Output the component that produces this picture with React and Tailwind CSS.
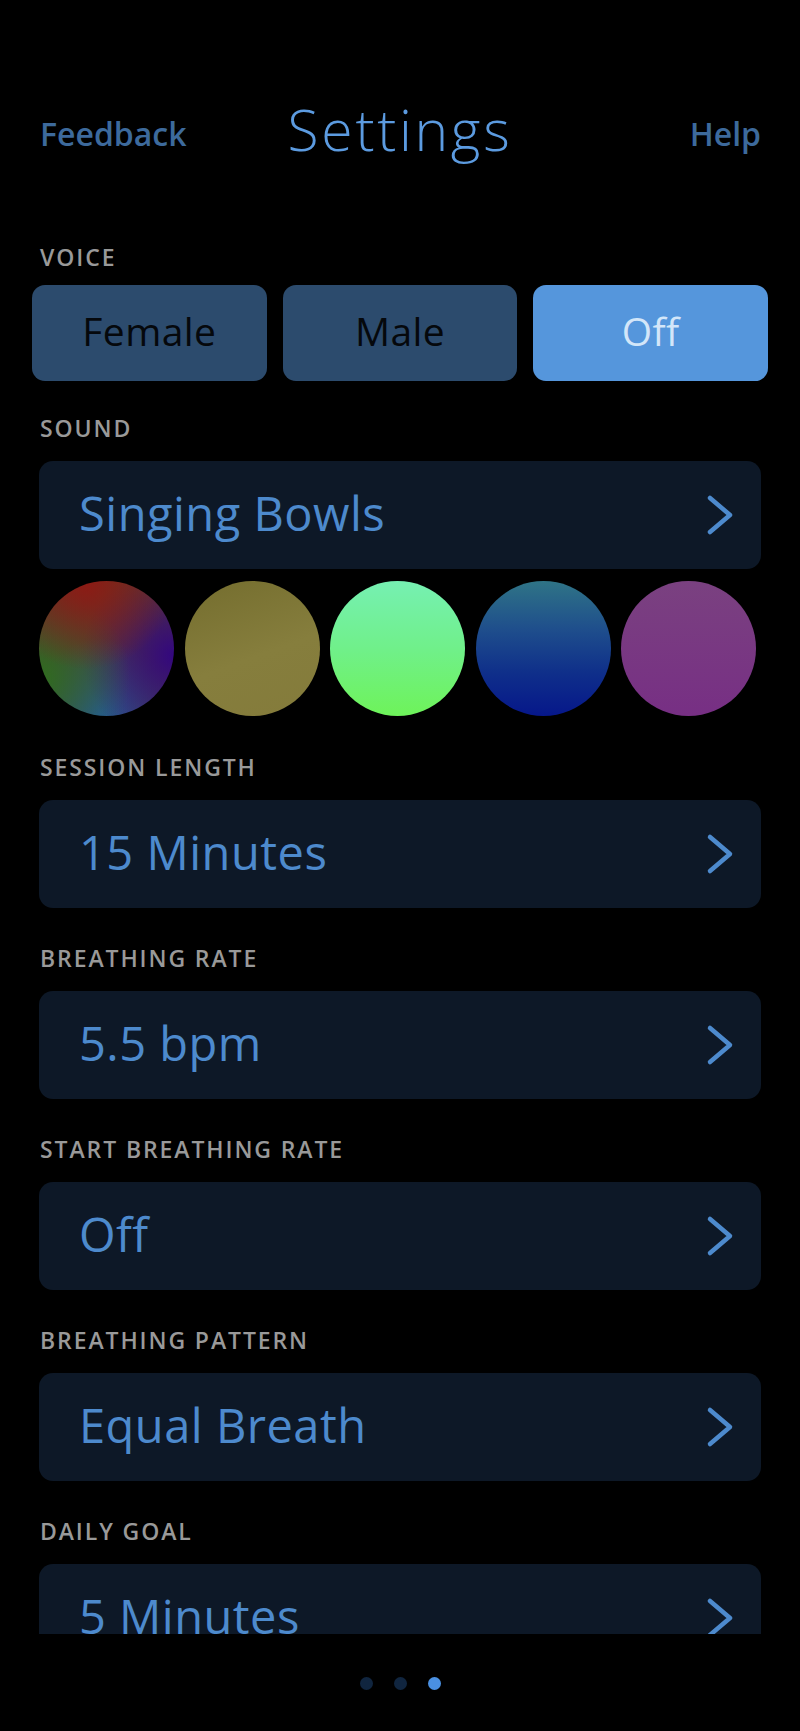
import React from 'react';

const font = { fontFamily: '"Open Sans", Lato, sans-serif' };

function Label({ children, className = '' }) {
  return (
    <div className={`h-6 flex items-center pl-px text-[23px] leading-6 font-semibold tracking-[1.9px] text-[#999999] ${className}`}>
      {children}
    </div>
  );
}

function Chevron() {
  return (
    <svg width="30" height="44" viewBox="0 0 30 44" fill="none" className="shrink-0">
      <path d="M5 5 L25 22 L5 39" stroke="#4d8acd" strokeWidth="4.5" strokeLinecap="round" strokeLinejoin="round" />
    </svg>
  );
}

function PickerCard({ value, className = '' }) {
  return (
    <div className={`h-[108px] rounded-[14px] bg-[#0d1827] pl-10 pr-[26px] flex items-center justify-between ${className}`}>
      <span className="text-[47px] leading-none tracking-[0.5px] text-[#4d8acd] pb-1">{value}</span>
      <Chevron />
    </div>
  );
}

export default function App() {
  const voices = [
    { name: 'Female', active: false },
    { name: 'Male', active: false },
    { name: 'Off', active: true },
  ];

  const orbs = [
    '[background-image:radial-gradient(circle_at_35%_0%,#8e1a14_0%,transparent_55%),radial-gradient(circle_at_0%_72%,#2f6d1e_0%,transparent_55%),radial-gradient(circle_at_100%_55%,#33077f_0%,transparent_60%),radial-gradient(circle_at_45%_100%,#24589c_0%,transparent_50%),linear-gradient(#5a3a26,#473a4c)]',
    '[background-image:linear-gradient(160deg,#746d2e,#867e3d_55%,#847b3b)]',
    '[background-image:linear-gradient(180deg,#76f0b2_0%,#70f08a_50%,#6ef35a_100%)]',
    '[background-image:linear-gradient(180deg,#2f7486_0%,#1f4f8c_35%,#0f2f8a_68%,#06178a_100%)]',
    '[background-image:linear-gradient(180deg,#7a4180_0%,#772f84_100%)]',
  ];

  const rows = [
    { label: 'BREATHING RATE', value: '5.5 bpm' },
    { label: 'START BREATHING RATE', value: 'Off' },
    { label: 'BREATHING PATTERN', value: 'Equal Breath' },
    { label: 'DAILY GOAL', value: '5 Minutes' },
  ];

  return (
    <div className="w-[800px] h-[1731px] bg-black overflow-hidden" style={font}>
      {/* scroll area */}
      <div className="h-[1634px] overflow-hidden pl-[39px] pr-[39px]">
        {/* Header */}
        <div className="pt-[99px]">
          <div className="h-[70px] grid grid-cols-[1fr_auto_1fr] items-center">
            <span className="pl-px text-[32px] leading-none font-semibold text-[#3d6a9c]">Feedback</span>
            <span className="text-[57px] leading-none font-light tracking-[2.7px] text-[#5c9be0] pb-[10px]">Settings</span>
            <span className="justify-self-end text-[32px] leading-none font-semibold text-[#3d6a9c]">Help</span>
          </div>
        </div>

        <Label className="mt-[76px]">VOICE</Label>
        <div className="mt-4 -mx-[7px] grid grid-cols-3 gap-4">
          {voices.map((v) => (
            <div
              key={v.name}
              className={`h-[96px] rounded-[13px] flex items-center justify-center text-[39px] font-medium tracking-[0.4px] ${v.active ? 'bg-[#5596dc] text-[#d3e6f9]' : 'bg-[#2c4b6d] text-[#05080c]'}`}
            >
              <span className="pb-1">{v.name}</span>
            </div>
          ))}
        </div>

        <Label className="mt-[35px]">SOUND</Label>
        <PickerCard value="Singing Bowls" className="mt-[21px] h-[107px]" />

        <div className="mt-3 flex gap-[10.5px]">
          {orbs.map((o, i) => (
            <div key={i} className={`w-[135px] h-[135px] rounded-full shrink-0 ${o}`}></div>
          ))}
        </div>

        <Label className="mt-[39px]">SESSION LENGTH</Label>
        <PickerCard value="15 Minutes" className="mt-[21px]" />

        {rows.map((r) => (
          <div key={r.label}>
            <Label className="mt-[38px]">{r.label}</Label>
            <PickerCard value={r.value} className="mt-[21px]" />
          </div>
        ))}
      </div>

      {/* page dots */}
      <div className="mt-[43px] flex justify-center gap-[21px]">
        <div className="w-[13px] h-[13px] rounded-full bg-[#10253f]"></div>
        <div className="w-[13px] h-[13px] rounded-full bg-[#10253f]"></div>
        <div className="w-[13px] h-[13px] rounded-full bg-[#4a90e2]"></div>
      </div>
    </div>
  );
}
